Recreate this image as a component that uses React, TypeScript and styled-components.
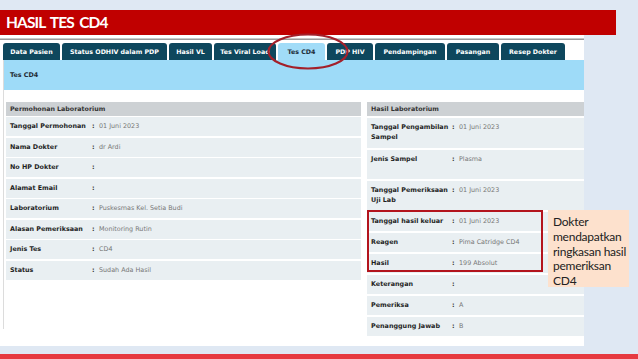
import styled, { createGlobalStyle } from 'styled-components'

const GlobalStyle = createGlobalStyle`
  html, body {
    margin: 0;
    padding: 0;
    background: #dfe8f3;
    overflow: hidden;
  }
  * {
    box-sizing: border-box;
  }
`

interface Field {
  label: string;
  value: string;
  height?: number;
}

const tabs = [
  {name: 'Data Pasien', width: 57},
  {name: 'Status ODHIV dalam PDP', width: 105},
  {name: 'Hasil VL', width: 43},
  {name: 'Tes Viral Load', width: 62},
  {name: 'Tes CD4', width: 47, active: true},
  {name: 'PDP HIV', width: 46},
  {name: 'Pendampingan', width: 70},
  {name: 'Pasangan', width: 52},
  {name: 'Resep Dokter', width: 64},
]

const requestFields: Field[] = [
  {label: 'Tanggal Permohonan', value: '01 Juni 2023'},
  {label: 'Nama Dokter', value: 'dr Ardi'},
  {label: 'No HP Dokter', value: ''},
  {label: 'Alamat Email', value: ''},
  {label: 'Laboratorium', value: 'Puskesmas Kel. Setia Budi'},
  {label: 'Alasan Pemeriksaan', value: 'Monitoring Rutin'},
  {label: 'Jenis Tes', value: 'CD4'},
  {label: 'Status', value: 'Sudah Ada Hasil'},
]

const resultFields: Field[] = [
  {label: 'Tanggal Pengambilan Sampel', value: '01 Juni 2023', height: 30},
  {label: 'Jenis Sampel', value: 'Plasma', height: 29},
  {label: 'Tanggal Pemeriksaan Uji Lab', value: '01 Juni 2023', height: 29},
  {label: 'Tanggal hasil keluar', value: '01 Juni 2023'},
  {label: 'Reagen', value: 'Pima Catridge CD4'},
  {label: 'Hasil', value: '199 Absolut'},
  {label: 'Keterangan', value: ''},
  {label: 'Pemeriksa', value: 'A'},
  {label: 'Penanggung Jawab', value: 'B'},
]

const Slide = styled.div`
  position: relative;
  width: 638px;
  height: 359px;
  padding-top: 10px;
`

const TitleBar = styled.div`
  width: 616px;
  height: 25px;
  background: #c00000;
  color: #fff;
  font-family: Lato, "Open Sans", sans-serif;
  font-weight: 700;
  font-size: 15.5px;
  line-height: 25px;
  padding-left: 6px;
  letter-spacing: -0.9px;
  word-spacing: 2.5px;
`

const Panel = styled.div`
  width: 584px;
  height: 311px;
  background: #fff;
  padding-top: 3px;
  font-family: "DejaVu Sans", Verdana, sans-serif;
`

const Rule = styled.div`
  height: 2px;
  border-top: 1px solid #c8c8c8;
  border-bottom: 1px solid #9a9a9a;
`

const TabBar = styled.div`
  display: flex;
  gap: 2px;
  margin-top: 3px;
  padding-left: 3px;
  height: 17px;
`

const Tab = styled.div<{ $active?: boolean; $width: number }>`
  width: ${p => p.$width}px;
  flex: none;
  border-radius: 3px 3px 0 0;
  background: ${p => (p.$active ? '#a1dcf8' : '#0e475d')};
  color: ${p => (p.$active ? '#1c2d38' : '#fff')};
  font-size: 6.3px;
  font-weight: 600;
  line-height: 17px;
  text-align: center;
  white-space: nowrap;
  overflow: hidden;
`

const Content = styled.div`
  margin-left: 3px;
  border-left: 1px solid #dcdcdc;
  height: 269px;
`

const Band = styled.div`
  height: 30px;
  background: #9edbf8;
  font-size: 6.4px;
  font-weight: 700;
  color: #1e2a33;
  line-height: 30px;
  padding-left: 6px;
`

const Columns = styled.div`
  display: flex;
  gap: 6px;
  margin-top: 12px;
  padding-left: 2px;
`

const Card = styled.div<{ $width?: number }>`
  display: flex;
  flex-direction: column;
  gap: ${p => (p.$width ? '1.5px' : '2px')};
  ${p => (p.$width ? `width: ${p.$width}px;` : 'flex: 1;')}
`

const CardHeader = styled.div`
  height: 14px;
  background: #cdd1d4;
  color: #333;
  font-size: 6.3px;
  font-weight: 600;
  line-height: 14px;
  padding-left: 4px;
  margin-bottom: -0.5px;
`

const Row = styled.div<{ $height?: number; $labelWidth: number }>`
  display: grid;
  grid-template-columns: ${p => p.$labelWidth}px 6px 1fr;
  align-items: ${p => (p.$height ? 'start' : 'center')};
  height: ${p => p.$height ?? 19}px;
  padding-top: ${p => (p.$height ? '4px' : '0')};
  background: #e9eff2;
  padding-left: 4px;
  font-size: 6.4px;
  line-height: 10.5px;
`

const Label = styled.span`
  font-weight: 700;
  color: #1f1f1f;
`

const Colon = styled.span`
  font-weight: 700;
  color: #333;
`

const Value = styled.span`
  color: #777;
  padding-left: 1px;
`

const BottomBar = styled.div`
  margin-top: 8px;
  height: 10px;
  background: #e63a40;
`

const Ellipse = styled.svg`
  position: absolute;
  left: 266px;
  top: 32px;
  pointer-events: none;
`

const Highlight = styled.div`
  position: absolute;
  left: 367px;
  top: 210px;
  width: 176px;
  height: 62px;
  border: 2px solid #b3141d;
`

const Callout = styled.div`
  position: absolute;
  left: 548px;
  top: 210px;
  width: 81px;
  height: 77px;
  background: #fde1cd;
  padding: 5px 0 0 5px;
  font-family: Lato, "Open Sans", sans-serif;
  font-size: 12px;
  line-height: 14.8px;
  letter-spacing: -0.25px;
  color: #222;
  white-space: nowrap;
`

const FieldRow = ({field, labelWidth}: {field: Field; labelWidth: number}) => (
  <Row $height={field.height} $labelWidth={labelWidth}>
    <Label>{field.label}</Label>
    <Colon>:</Colon>
    <Value>{field.value}</Value>
  </Row>
)

const App = () => {
  return (
    <>
      <GlobalStyle />
      <Slide>
        <TitleBar>HASIL TES CD4</TitleBar>
        <Panel>
          <Rule />
          <TabBar>
            {tabs.map(t => (
              <Tab key={t.name} $width={t.width} $active={t.active}>
                {t.name}
              </Tab>
            ))}
          </TabBar>
          <Content>
            <Band>Tes CD4</Band>
            <Columns>
              <Card $width={355}>
                <CardHeader>Permohonan Laboratorium</CardHeader>
                {requestFields.map(f => (
                  <FieldRow key={f.label} field={f} labelWidth={82} />
                ))}
              </Card>
              <Card>
                <CardHeader>Hasil Laboratorium</CardHeader>
                {resultFields.map(f => (
                  <FieldRow key={f.label} field={f} labelWidth={81} />
                ))}
              </Card>
            </Columns>
          </Content>
        </Panel>
        <BottomBar />
        <Ellipse width="84" height="40" viewBox="0 0 84 40">
          <ellipse cx="42" cy="19.5" rx="39.5" ry="17" fill="none" stroke="#a3202a" strokeWidth="2.2" />
        </Ellipse>
        <Highlight />
        <Callout>
          Dokter<br />
          mendapatkan<br />
          ringkasan hasil<br />
          pemeriksan<br />
          CD4
        </Callout>
      </Slide>
    </>
  )
}

export default App
